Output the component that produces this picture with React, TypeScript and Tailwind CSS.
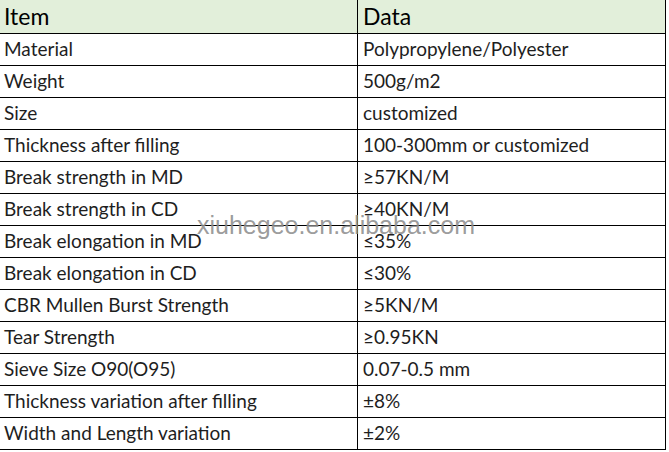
import React from 'react';

const rows: [string, string][] = [
  ['Material', 'Polypropylene/Polyester'],
  ['Weight', '500g/m2'],
  ['Size', 'customized'],
  ['Thickness after filling', '100-300mm or customized'],
  ['Break strength in MD', '≥57KN/M'],
  ['Break strength in CD', '≥40KN/M'],
  ['Break elongation in MD', '≤35%'],
  ['Break elongation in CD', '≤30%'],
  ['CBR Mullen Burst Strength', '≥5KN/M'],
  ['Tear Strength', '≥0.95KN'],
  ['Sieve Size O90(O95)', '0.07-0.5 mm'],
  ['Thickness variation after filling', '±8%'],
  ['Width and Length variation', '±2%'],
];

export default function App() {
  return (
    <div className="relative w-[669px] h-[452px] bg-white overflow-hidden" style={{ fontFamily: 'Lato, "Open Sans", sans-serif' }}>
      <div className="w-[666px] border-r border-black">
        <div className="flex h-[34px] bg-[#e2efda] border-b border-black text-[23px] text-black">
          <div className="w-[358px] pl-[4px] flex items-center border-r border-black">Item</div>
          <div className="flex-1 pl-[5px] flex items-center">Data</div>
        </div>
        {rows.map(([k, v]) => (
          <div key={k} className="flex h-[32px] border-b border-black text-[19px] text-[#1e1e1e]">
            <div className="w-[358px] pl-[4px] flex items-center border-r border-black">{k}</div>
            <div className="flex-1 pl-[5px] flex items-center">{v}</div>
          </div>
        ))}
      </div>
      <div
        className="absolute left-[197px] top-[213px] text-[25px] text-[#8f8f8f]/90 leading-none pointer-events-none"
        style={{ fontFamily: '"Liberation Sans", Arial, sans-serif' }}
      >
        xiuhegeo.en.alibaba.com
      </div>
    </div>
  );
}
